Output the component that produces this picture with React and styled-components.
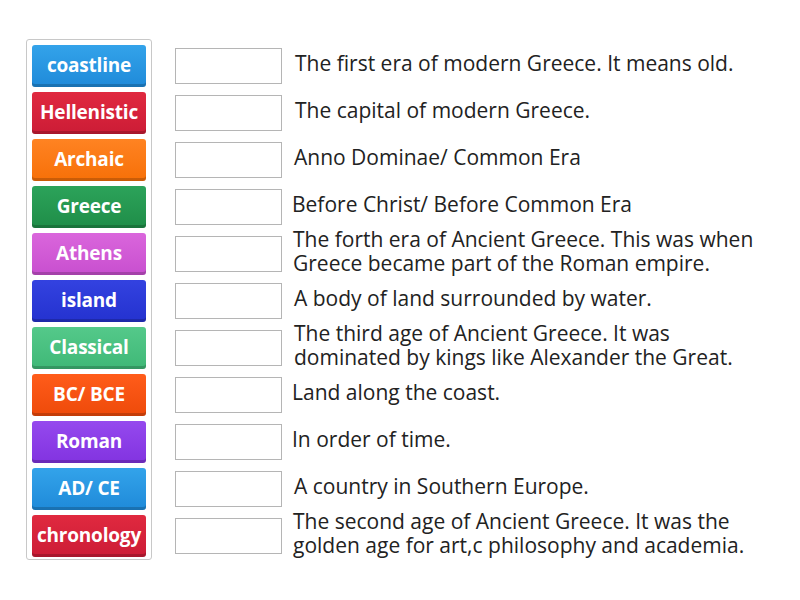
import React from 'react';
import styled, { createGlobalStyle } from 'styled-components';

const GlobalStyle = createGlobalStyle`
    html, body {
        margin: 0;
        padding: 0;
        background: #fff;
        font-family: "Open Sans", "Liberation Sans", sans-serif;
    }
`

const Page = styled.div`
    display: flex;
    align-items: flex-start;
    padding: 39px 0 0 26px;
    width: 800px;
    height: 600px;
    box-sizing: border-box;
`

const TilePanel = styled.div`
    display: flex;
    flex-direction: column;
    gap: 5px;
    padding: 5px 5px 2px 5px;
    border: 1px solid #c8c8c8;
    border-radius: 3px;
`

const Tile = styled.div`
    width: 114px;
    height: 42px;
    box-sizing: border-box;
    display: flex;
    align-items: center;
    justify-content: center;
    border-radius: 3px;
    background: linear-gradient(${p => p.light}, ${p => p.color});
    box-shadow: inset 0 -3px 0 rgba(0, 0, 0, 0.18);
    color: #fff;
    font-weight: 700;
    font-size: 19px;
    letter-spacing: -0.2px;
    padding-bottom: 3px;
    white-space: nowrap;
`

const Rows = styled.div`
    display: flex;
    flex-direction: column;
    margin-left: 23px;
    padding-top: 3px;
`

const Row = styled.div`
    display: flex;
    align-items: center;
    height: 47px;
`

const Slot = styled.div`
    width: 107px;
    height: 36px;
    box-sizing: border-box;
    border: 1px solid #b5b5b5;
    background: #fff;
    flex-shrink: 0;
`

const Clue = styled.div`
    margin-left: ${p => p.shift}px;
    margin-top: -6px;
    font-size: 21px;
    line-height: 24px;
    color: #222;
    width: 470px;
`

const tiles = [
    { text: 'coastline', color: '#1f8ad9', light: '#33a3ea' },
    { text: 'Hellenistic', color: '#cc1c36', light: '#e0293f' },
    { text: 'Archaic', color: '#f77008', light: '#ff8322' },
    { text: 'Greece', color: '#1f8d48', light: '#2ca35a' },
    { text: 'Athens', color: '#c84fcf', light: '#da66dc' },
    { text: 'island', color: '#2432cf', light: '#3342e0' },
    { text: 'Classical', color: '#3fb877', light: '#54c98a' },
    { text: 'BC/ BCE', color: '#ee4a0a', light: '#ff5c1a' },
    { text: 'Roman', color: '#8233e0', light: '#9549ee' },
    { text: 'AD/ CE', color: '#1f8ad9', light: '#33a3ea' },
    { text: 'chronology', color: '#cc1c36', light: '#e0293f' },
];

const clues = [
    { text: 'The first era of modern Greece. It means old.', shift: 13 },
    { text: 'The capital of modern Greece.', shift: 13 },
    { text: 'Anno Dominae/ Common Era', shift: 12 },
    { text: 'Before Christ/ Before Common Era', shift: 10 },
    { text: 'The forth era of Ancient Greece. This was when Greece became part of the Roman empire.', shift: 11 },
    { text: 'A body of land surrounded by water.', shift: 12 },
    { text: 'The third age of Ancient Greece. It was dominated by kings like Alexander the Great.', shift: 12 },
    { text: 'Land along the coast.', shift: 10 },
    { text: 'In order of time.', shift: 10 },
    { text: 'A country in Southern Europe.', shift: 12 },
    { text: 'The second age of Ancient Greece. It was the golden age for art,c philosophy and academia.', shift: 11 },
];

const App = () => (
    <Page>
        <GlobalStyle />
        <TilePanel>
            {tiles.map(t =>
                <Tile key={t.text} color={t.color} light={t.light}>{t.text}</Tile>
            )}
        </TilePanel>
        <Rows>
            {clues.map(c =>
                <Row key={c.text}>
                    <Slot />
                    <Clue shift={c.shift}>{c.text}</Clue>
                </Row>
            )}
        </Rows>
    </Page>
);

export default App;
